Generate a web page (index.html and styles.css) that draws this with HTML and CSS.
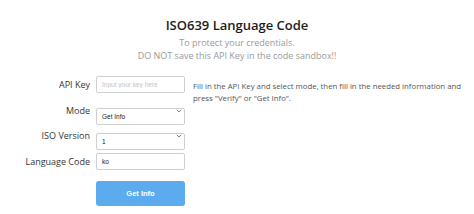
FILE: index.html
```html
<!DOCTYPE html>
<html lang="en">
<head>
    <meta charset="UTF-8">
    <meta name="viewport" content="width=device-width, initial-scale=1.0">
    <title>ISO639 Language Code</title>
    <link rel="stylesheet" href="styles.css">
</head>
<body>

    <!-- Header -->
    <div class="title">ISO639 Language Code</div>
    <div class="subtitle">
        To protect your credentials.<br>
        DO NOT save this API Key in the code sandbox!!
    </div>

    <div class="main">
        <div class="form">
            <label for="apikey">API Key</label>
            <input id="apikey" type="text" placeholder="Input your key here">

            <label for="mode">Mode</label>
            <div class="select-wrap">
                <select id="mode">
                    <option>Get Info</option>
                    <option>Verify</option>
                </select>
                <svg class="chevron" width="6" height="4" viewBox="0 0 6 4"><path d="M0.8 0.8 L3 3 L5.2 0.8" fill="none" stroke="#777" stroke-width="0.9"/></svg>
            </div>

            <label for="version">ISO Version</label>
            <div class="select-wrap">
                <select id="version">
                    <option>1</option>
                    <option>2</option>
                    <option>3</option>
                </select>
                <svg class="chevron" width="6" height="4" viewBox="0 0 6 4"><path d="M0.8 0.8 L3 3 L5.2 0.8" fill="none" stroke="#777" stroke-width="0.9"/></svg>
            </div>

            <label for="code">Language Code</label>
            <input id="code" type="text" value="ko">

            <span></span>
            <button class="submit">Get Info</button>
        </div>

        <div class="help">
            Fill in the API Key and select mode, then fill in the needed information and<br>
            press "Verify" or "Get Info".
        </div>
    </div>

</body>
</html>
```

FILE: styles.css
```css
body {
    font-family: 'Open Sans', sans-serif;
    background-color: #fff;
    margin: 0;
    padding-top: 16px;
    color: #222;
    font-variant-ligatures: none;
}

.title {
    text-align: center;
    font-size: 13px;
    font-weight: 600;
    line-height: 18px;
    color: #1d1d1d;
}

.subtitle {
    text-align: center;
    font-size: 9px;
    line-height: 12.5px;
    color: #9a9a9a;
    margin-top: 3px;
}

.main {
    display: flex;
    align-items: flex-start;
    padding-left: 20px;
    margin-top: 14px;
}

.form {
    display: grid;
    grid-template-columns: 70px 89px;
    column-gap: 6px;
    row-gap: 8.6px;
    align-items: center;
}

.form label {
    text-align: right;
    font-size: 9px;
    color: #333;
}

.form input,
.form select {
    width: 100%;
    height: 17px;
    box-sizing: border-box;
    border: 1px solid #cfcfcf;
    border-radius: 2px;
    padding: 0 5px;
    font-family: 'Liberation Sans', Arial, sans-serif;
    font-size: 6.5px;
    color: #222;
    background-color: #fff;
    outline: none;
}

.form input::placeholder {
    color: #c4c4c4;
}

.form select {
    appearance: none;
    -webkit-appearance: none;
}

.select-wrap {
    position: relative;
    height: 17px;
}

.select-wrap .chevron {
    position: absolute;
    right: 3px;
    top: 7px;
    pointer-events: none;
}

.submit {
    grid-column: 2;
    margin-top: 3px;
    height: 25px;
    border: none;
    border-radius: 3px;
    background-color: #5cabee;
    color: #fff;
    font-family: 'Liberation Sans', Arial, sans-serif;
    font-weight: bold;
    font-size: 7.5px;
    cursor: pointer;
}

.help {
    margin-left: 8px;
    margin-top: 5px;
    font-size: 7.8px;
    line-height: 11.5px;
    color: #555;
    white-space: nowrap;
}
```
